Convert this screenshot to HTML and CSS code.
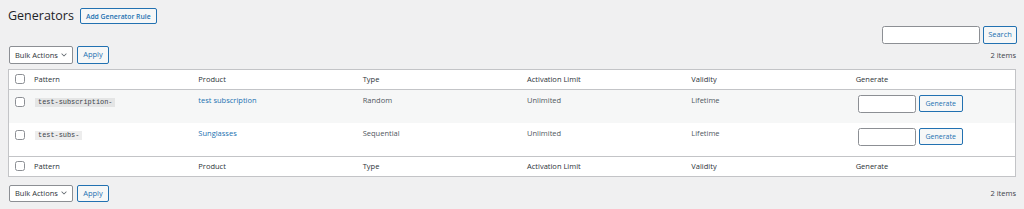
FILE: index.html
```html
<!DOCTYPE html>
<html lang="en">
<head>
<meta charset="utf-8">
<title>Generators</title>
<link rel="stylesheet" href="styles.css">
</head>
<body>
<div class="wrap">
  <div class="page-head">
    <h1 class="page-title">Generators</h1>
    <a class="title-action" href="#">Add Generator Rule</a>
  </div>

  <div class="search-row">
    <input class="search-input" type="search" aria-label="Search">
    <button class="btn btn-search" type="button">Search</button>
  </div>

  <div class="tablenav">
    <div class="bulk">
      <div class="bulk-select"><span>Bulk Actions</span><svg class="chev" viewBox="0 0 20 20" width="8" height="8"><path d="M5 6l5 5 5-5 2 1-7 7-7-7 2-1z" fill="#50575e"/></svg></div>
      <button class="btn btn-apply" type="button">Apply</button>
    </div>
    <span class="count">2 items</span>
  </div>

  <table class="list">
    <colgroup>
      <col class="c-check"><col><col><col><col><col><col>
    </colgroup>
    <thead>
      <tr>
        <th class="check-col"><input class="cb" type="checkbox"></th>
        <th>Pattern</th>
        <th>Product</th>
        <th>Type</th>
        <th>Activation Limit</th>
        <th>Validity</th>
        <th>Generate</th>
      </tr>
    </thead>
    <tbody>
      <tr>
        <td class="check-col"><input class="cb" type="checkbox"></td>
        <td class="pattern"><code>test-subscription-</code></td>
        <td><a class="link" href="#">test subscription</a></td>
        <td>Random</td>
        <td>Unlimited</td>
        <td>Lifetime</td>
        <td class="gen-cell"><div class="gen"><input class="gen-input" type="text"><button class="btn gen-btn" type="button">Generate</button></div></td>
      </tr>
      <tr>
        <td class="check-col"><input class="cb" type="checkbox"></td>
        <td class="pattern"><code>test-subs-</code></td>
        <td><a class="link" href="#">Sunglasses</a></td>
        <td>Sequential</td>
        <td>Unlimited</td>
        <td>Lifetime</td>
        <td class="gen-cell"><div class="gen"><input class="gen-input" type="text"><button class="btn gen-btn" type="button">Generate</button></div></td>
      </tr>
    </tbody>
    <tfoot>
      <tr>
        <th class="check-col"><input class="cb" type="checkbox"></th>
        <th>Pattern</th>
        <th>Product</th>
        <th>Type</th>
        <th>Activation Limit</th>
        <th>Validity</th>
        <th>Generate</th>
      </tr>
    </tfoot>
  </table>

  <div class="tablenav tablenav-bottom">
    <div class="bulk">
      <div class="bulk-select"><span>Bulk Actions</span><svg class="chev" viewBox="0 0 20 20" width="8" height="8"><path d="M5 6l5 5 5-5 2 1-7 7-7-7 2-1z" fill="#50575e"/></svg></div>
      <button class="btn btn-apply" type="button">Apply</button>
    </div>
    <span class="count">2 items</span>
  </div>
</div>
</body>
</html>
```

FILE: styles.css
```css
* { box-sizing: border-box; }

body {
  margin: 0;
  background: #f0f0f1;
  font-family: "Open Sans", "Noto Sans", sans-serif;
  font-size: 7.5px;
  color: #3c434a;
}

.wrap {
  padding: 0 7px 0 8px;
}

.page-head {
  display: flex;
  align-items: center;
  gap: 6px;
  height: 16px;
  margin-top: 8px;
}

.page-title {
  margin: 0;
  font-size: 12.5px;
  font-weight: 400;
  line-height: 16px;
  color: #1d2327;
}

.title-action {
  display: inline-flex;
  align-items: center;
  height: 16px;
  padding: 0 5px;
  border: 1px solid #2271b1;
  border-radius: 2px;
  background: #f6f7f7;
  color: #2271b1;
  font-size: 6.8px;
  font-weight: 600;
  text-decoration: none;
}

.search-row {
  display: flex;
  justify-content: flex-end;
  gap: 3px;
  height: 17.5px;
  margin-top: 2px;
}

.search-input {
  width: 98px;
  height: 17.5px;
  margin: 0;
  padding: 0;
  border: 1px solid #8c8f94;
  border-radius: 2.5px;
  background: #fff;
}

.btn {
  height: 17.5px;
  margin: 0;
  padding: 0 5px;
  border: 1px solid #2271b1;
  border-radius: 2px;
  background: #f6f7f7;
  color: #2271b1;
  font-family: inherit;
  font-size: 7.5px;
  line-height: 1;
}

.btn-search { width: 34px; padding: 0; }
.btn-apply { width: 32px; padding: 0; }

.tablenav {
  display: flex;
  justify-content: space-between;
  align-items: center;
  height: 17.5px;
  margin-top: 2.5px;
}

.bulk {
  display: flex;
  gap: 4px;
  margin-left: 1px;
}

.bulk-select {
  display: flex;
  align-items: center;
  justify-content: space-between;
  width: 64px;
  height: 17.5px;
  padding: 0 4px 0 5px;
  border: 1px solid #8c8f94;
  border-radius: 2px;
  background: #fff;
  color: #2c3338;
}

.chev { display: block; }

.count {
  color: #3c434a;
  margin-right: 1px;
}

.list {
  width: calc(100% - 1px);
  margin-top: 5px;
  border: 1px solid #c3c4c7;
  border-collapse: separate;
  border-spacing: 0;
  table-layout: fixed;
  background: #fff;
}

.c-check { width: 20px; }

.list th {
  padding: 5px 5px;
  line-height: 9px;
  text-align: left;
  font-weight: 400;
  color: #2c3338;
}

.list thead th { border-bottom: 1px solid #c3c4c7; }
.list tfoot th { border-top: 1px solid #c3c4c7; }

.list th.check-col {
  padding: 0 0 0 6px;
  vertical-align: middle;
}

.list tbody tr { height: 33px; }
.list tbody tr:nth-child(odd) { background: #f6f7f7; }

.list td {
  padding: 6px 5px 0;
  line-height: 9px;
  vertical-align: top;
  color: #50575e;
}

.list td.check-col {
  padding: 7.5px 0 0 6px;
}

.cb {
  display: block;
  appearance: none;
  -webkit-appearance: none;
  width: 10px;
  height: 10px;
  margin: 0;
  border: 1px solid #8c8f94;
  border-radius: 2.5px;
  background: #fff;
}

.list td.pattern { padding-top: 7px; }

code {
  display: inline-block;
  margin-left: 1px;
  padding: 1px 3px;
  background: rgba(0, 0, 0, 0.07);
  font-family: "Liberation Mono", "DejaVu Sans Mono", monospace;
  font-size: 6.9px;
  line-height: 7px;
  color: #3c434a;
}

.link {
  color: #2271b1;
  text-decoration: none;
}

.list td.gen-cell { padding-top: 5px; }

.gen {
  display: flex;
  align-items: center;
  gap: 3px;
  margin-left: 2px;
}

.gen-input {
  width: 58px;
  height: 18px;
  margin: 0;
  padding: 0;
  border: 1px solid #8c8f94;
  border-radius: 2.5px;
  background: #fff;
}

.gen-btn {
  width: 44px;
  padding: 0;
  font-size: 7px;
}

.tablenav-bottom {
  margin-top: 8px;
}
```
